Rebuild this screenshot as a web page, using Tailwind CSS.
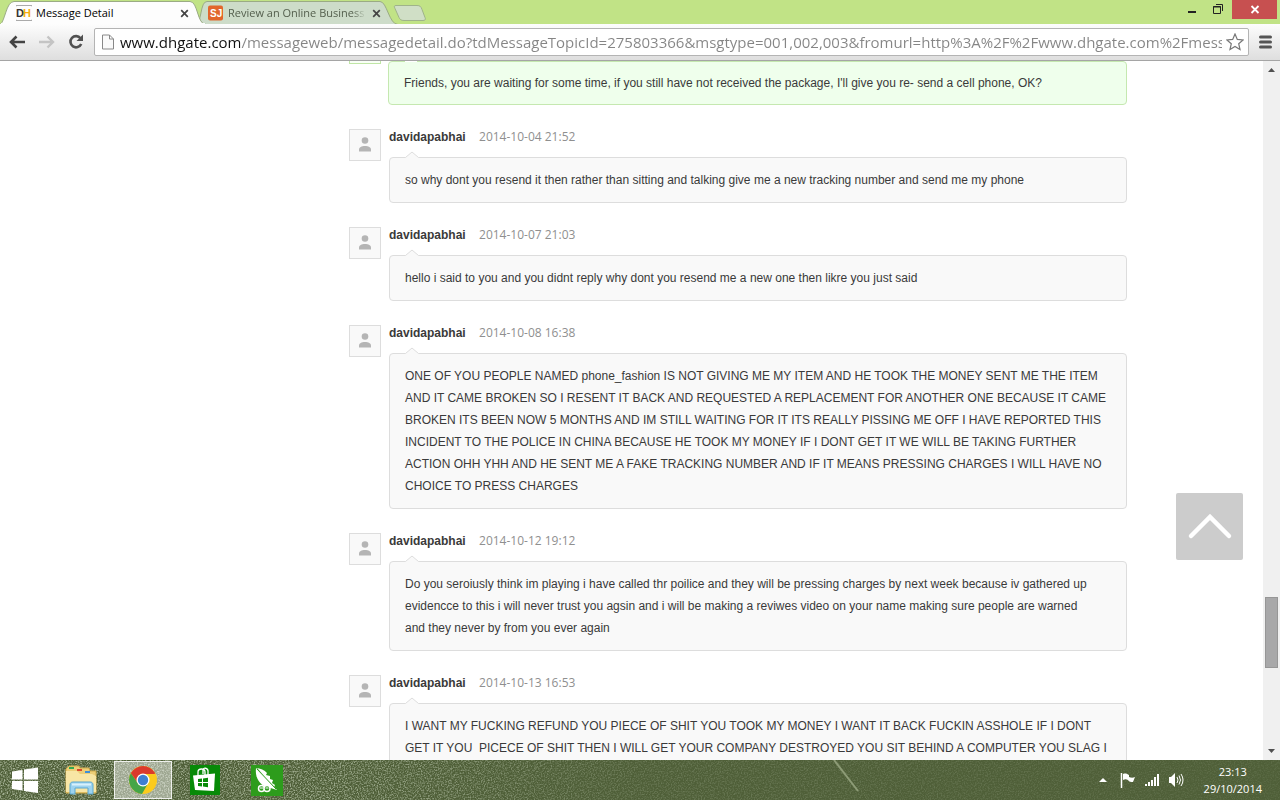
<!DOCTYPE html>
<html lang="en">
<head>
    <meta charset="UTF-8">
    <meta name="viewport" content="width=device-width, initial-scale=1.0">
    <title>Message Detail</title>
    <script src="https://cdn.jsdelivr.net/npm/@tailwindcss/browser@4"></script>
</head>
<body class="h-screen flex flex-col overflow-hidden bg-white font-['Liberation_Sans',Arial,sans-serif] text-xs text-[#3a3a3a]">

<!-- Shared icons -->
<svg class="hidden">
    <symbol id="user" viewBox="0 0 30 30">
        <circle cx="15" cy="10.500" r="3.300" fill="#b5b5b5"/>
        <path d="M9 21.500v-2c0-2 2.500-3.500 6-3.500s6 1.500 6 3.500v2z" fill="#b5b5b5"/>
    </symbol>
    <symbol id="notch" viewBox="0 0 14 7">
        <path d="M0 7L7 1l7 6z" fill="#f9f9f9"/>
        <path d="M0.500 6.500L7 1l6.500 5.500" fill="none" stroke="#ddd"/>
    </symbol>
    <symbol id="close" viewBox="0 0 9 9">
        <path d="M1.200 1.200l6.600 6.600M7.800 1.200l-6.600 6.600" stroke="#444" stroke-width="1.700"/>
    </symbol>
</svg>

<!-- Tab strip -->
<header class="relative h-6 shrink-0 flex items-center bg-[#c1e386] font-['Open_Sans',sans-serif] text-[11px]">
    <svg class="absolute left-0 top-0 w-[440px] h-6" viewBox="0 0 440 24">
        <path d="M196 24.500C202 22 200 1.500 207 1.500H380C387 1.500 389 24.500 398 24.500z" fill="#cddcc9" stroke="#9aab84"/>
        <path d="M396 5.500h21c3 0 4 1 5 4l3 8c1 2 0 3-2 3h-19c-3 0-4-1-5-3l-4-9c-1-2-1-3 1-3z" fill="#d0dfc6" stroke="#9fb38a"/>
        <path d="M0 24.500C5 22 6 1.500 14 1.500H190C198 1.500 197 24.500 206 24.500z" fill="#fdfdfd" stroke="#9aab84"/>
        <path d="M1 24h204" stroke="#fdfdfd" stroke-width="2"/>
    </svg>
    <div class="relative w-[205px] h-full flex items-center pl-4 pt-[2px]">
        <svg class="w-4 h-4" viewBox="0 0 16 16">
            <path d="M0 1.500V.5h16v1M0 14.500v1h16v-1" fill="none" stroke="#aaa"/>
            <text x="0" y="12" font-family="Liberation Sans" font-weight="bold" font-size="11" fill="#333">D</text>
            <text x="7" y="12" font-family="Liberation Sans" font-weight="bold" font-size="11" fill="#f5ae0b">H</text>
        </svg>
        <a href="#" class="ml-1 w-36 text-black whitespace-nowrap">Message Detail</a>
        <button aria-label="Close tab"><svg class="w-[9px] h-[9px]"><use href="#close"/></svg></button>
    </div>
    <div class="relative w-[190px] h-full flex items-center pl-[3px] pt-[2px]">
        <svg class="w-[15px] h-4 shrink-0" viewBox="0 0 15 16">
            <rect y=".5" width="15" height="15" rx="2" fill="#e2662c"/>
            <text x="2" y="12" font-family="Liberation Sans" font-weight="bold" font-size="10" fill="#fff">SJ</text>
        </svg>
        <a href="#" class="ml-[5px] w-[138px] whitespace-nowrap text-[#55604e] mask-r-from-90%">Review an Online Business</a>
        <button aria-label="Close tab" class="ml-[6px]"><svg class="w-[9px] h-[9px]"><use href="#close"/></svg></button>
    </div>
    <div class="ml-auto h-full flex items-start pr-[3px]">
        <button aria-label="Minimise" class="w-[26px] h-5"><svg class="w-[26px] h-5"><path d="M8 12h8" stroke="#222" stroke-width="2"/></svg></button>
        <button aria-label="Restore" class="w-[26px] h-5"><svg class="w-[26px] h-5"><path d="M7.500 6.500h7v7h-7zM7 7h8M10 4.500h6.500V11" fill="none" stroke="#222"/></svg></button>
        <button aria-label="Close" class="w-[45px] h-[19px] bg-[#c75050]"><svg class="w-[45px] h-[19px]"><path d="M19.500 6l7 7m0-7l-7 7" stroke="#fff" stroke-width="1.800"/></svg></button>
    </div>
</header>

<!-- Toolbar -->
<nav class="h-[37px] shrink-0 flex items-center bg-linear-to-b from-[#fdfdfd] to-[#dedede] border-b border-[#a5a5a5] px-2 font-['Open_Sans',sans-serif]">
    <button aria-label="Back" class="w-[18px] h-5"><svg class="w-[18px] h-5"><path d="M3 10h14M8.500 4.500L3 10l5.500 5.500" fill="none" stroke="#444" stroke-width="2.600"/></svg></button>
    <button aria-label="Forward" class="ml-3 w-[18px] h-5"><svg class="w-[18px] h-5"><path d="M1 10h14M9.500 4.500L15 10l-5.500 5.500" fill="none" stroke="#c4c4c4" stroke-width="2.400"/></svg></button>
    <button aria-label="Reload" class="ml-3 w-4 h-5"><svg class="w-4 h-5"><path d="M12.500 6.300A5.600 5.600 0 1 0 13.200 12" fill="none" stroke="#505050" stroke-width="2.600"/><path d="M15 2.500v6.500H8.500z" fill="#505050"/></svg></button>
    <div class="ml-[10px] flex-1 h-7 flex items-center bg-white border border-[#b4b4b4] rounded-xs pl-[7px] pr-1">
        <svg class="w-3 h-4 shrink-0" viewBox="0 0 12 16"><path d="M.5 1h7l4 4v10H.5zM7.500 1v4h4" fill="#fafafa" stroke="#888"/></svg>
        <input type="text" aria-label="Address" class="ml-[6px] flex-1 min-w-0 h-6 text-[15px] outline-none text-transparent bg-clip-text bg-[linear-gradient(to_right,#111_120px,#858585_120px)]" value="www.dhgate.com/messageweb/messagedetail.do?tdMessageTopicId=275803366&amp;msgtype=001,002,003&amp;fromurl=http%3A%2F%2Fwww.dhgate.com%2Fmessageweb">
        <button aria-label="Bookmark" class="ml-1 w-[18px] h-[18px] shrink-0"><svg class="w-[18px] h-[18px]" viewBox="0 0 18 18"><path d="M9 1l2.300 5.400 5.800.5-4.400 3.800 1.300 5.800-5-3.100-5 3.100 1.300-5.800L.9 6.900l5.800-.5z" fill="#fff" stroke="#777" stroke-width="1.200"/></svg></button>
    </div>
    <button aria-label="Menu" class="ml-[10px] w-[13px] h-5"><svg class="w-[13px] h-5"><path d="M1.500 5h10M1.500 10h10M1.500 15h10" stroke="#555" stroke-width="3" stroke-linecap="round"/></svg></button>
</nav>

<div class="relative flex-1 min-h-0 flex">
    <!-- Messages -->
    <main class="flex-1 h-full overflow-hidden pl-[349px] pr-[136px]">
        <div class="flex flex-col gap-6">
            <article class="flex">
                <div class="w-8 h-[3px] shrink-0 border-x border-b border-[#c0e6a6] bg-[#f9fff6]"></div>
                <div class="relative ml-[7px] flex-1 border border-[#c5e8b0] rounded-sm bg-[#efffec] px-[15px] py-[10px] leading-[22px]">
                    <span class="absolute -top-px left-4 w-3 h-px bg-white"></span>
                    Friends, you are waiting for some time, if you still have not received the package, I'll give you re- send a cell phone, OK?
                </div>
            </article>
            <article class="flex gap-2">
                <svg class="w-8 h-8 shrink-0 border border-[#ddd] bg-[#f9f9f9]"><use href="#user"/></svg>
                <div class="flex-1 min-w-0">
                    <h3 class="leading-4 font-bold">davidapabhai <time class="ml-[10px] font-normal text-[#8f8f8f] font-['Open_Sans']">2014-10-04 21:52</time></h3>
                    <div class="relative mt-3 border border-[#ddd] rounded-sm bg-[#f9f9f9] px-[15px] py-[11px] leading-[22px]">
                        <svg class="absolute -top-[7px] left-[15px] w-[14px] h-[7px]"><use href="#notch"/></svg>
                        so why dont you resend it then rather than sitting and talking give me a new tracking number and send me my phone
                    </div>
                </div>
            </article>
            <article class="flex gap-2">
                <svg class="w-8 h-8 shrink-0 border border-[#ddd] bg-[#f9f9f9]"><use href="#user"/></svg>
                <div class="flex-1 min-w-0">
                    <h3 class="leading-4 font-bold">davidapabhai <time class="ml-[10px] font-normal text-[#8f8f8f] font-['Open_Sans']">2014-10-07 21:03</time></h3>
                    <div class="relative mt-3 border border-[#ddd] rounded-sm bg-[#f9f9f9] px-[15px] py-[11px] leading-[22px]">
                        <svg class="absolute -top-[7px] left-[15px] w-[14px] h-[7px]"><use href="#notch"/></svg>
                        hello i said to you and you didnt reply why dont you resend me a new one then likre you just said
                    </div>
                </div>
            </article>
            <article class="flex gap-2">
                <svg class="w-8 h-8 shrink-0 border border-[#ddd] bg-[#f9f9f9]"><use href="#user"/></svg>
                <div class="flex-1 min-w-0">
                    <h3 class="leading-4 font-bold">davidapabhai <time class="ml-[10px] font-normal text-[#8f8f8f] font-['Open_Sans']">2014-10-08 16:38</time></h3>
                    <div class="relative mt-3 border border-[#ddd] rounded-sm bg-[#f9f9f9] px-[15px] py-[11px] leading-[22px]">
                        <svg class="absolute -top-[7px] left-[15px] w-[14px] h-[7px]"><use href="#notch"/></svg>
                        ONE OF YOU PEOPLE NAMED phone_fashion IS NOT GIVING ME MY ITEM AND HE TOOK THE MONEY SENT ME THE ITEM AND IT CAME BROKEN SO I RESENT IT BACK AND REQUESTED A REPLACEMENT FOR ANOTHER ONE BECAUSE IT CAME BROKEN ITS BEEN NOW 5 MONTHS AND IM STILL WAITING FOR IT ITS REALLY PISSING ME OFF I HAVE REPORTED THIS INCIDENT TO THE POLICE IN CHINA BECAUSE HE TOOK MY MONEY IF I DONT GET IT WE WILL BE TAKING FURTHER ACTION OHH YHH AND HE SENT ME A FAKE TRACKING NUMBER AND IF IT MEANS PRESSING CHARGES I WILL HAVE NO CHOICE TO PRESS CHARGES
                    </div>
                </div>
            </article>
            <article class="flex gap-2">
                <svg class="w-8 h-8 shrink-0 border border-[#ddd] bg-[#f9f9f9]"><use href="#user"/></svg>
                <div class="flex-1 min-w-0">
                    <h3 class="leading-4 font-bold">davidapabhai <time class="ml-[10px] font-normal text-[#8f8f8f] font-['Open_Sans']">2014-10-12 19:12</time></h3>
                    <div class="relative mt-3 border border-[#ddd] rounded-sm bg-[#f9f9f9] px-[15px] py-[11px] leading-[22px]">
                        <svg class="absolute -top-[7px] left-[15px] w-[14px] h-[7px]"><use href="#notch"/></svg>
                        Do you seroiusly think im playing i have called thr poilice and they will be pressing charges by next week because iv gathered up evidencce to this i will never trust you agsin and i will be making a reviwes video on your name making sure people are warned<br>
                        and they never by from you ever again
                    </div>
                </div>
            </article>
            <article class="flex gap-2">
                <svg class="w-8 h-8 shrink-0 border border-[#ddd] bg-[#f9f9f9]"><use href="#user"/></svg>
                <div class="flex-1 min-w-0">
                    <h3 class="leading-4 font-bold">davidapabhai <time class="ml-[10px] font-normal text-[#8f8f8f] font-['Open_Sans']">2014-10-13 16:53</time></h3>
                    <div class="relative mt-3 border border-[#ddd] rounded-sm bg-[#f9f9f9] px-[15px] py-[11px] leading-[22px]">
                        <svg class="absolute -top-[7px] left-[15px] w-[14px] h-[7px]"><use href="#notch"/></svg>
                        I WANT MY FUCKING REFUND YOU PIECE OF SHIT YOU TOOK MY MONEY I WANT IT BACK FUCKIN ASSHOLE IF I DONT GET IT YOU&nbsp; PICECE OF SHIT THEN I WILL GET YOUR COMPANY DESTROYED YOU SIT BEHIND A COMPUTER YOU SLAG I
                    </div>
                </div>
            </article>
        </div>
    </main>

    <!-- Back to top -->
    <button aria-label="Back to top" class="absolute right-[37px] bottom-[200px] w-[67px] h-[67px] rounded-xs bg-[#ccc]">
        <svg class="w-[67px] h-[67px]"><path d="M15 43l19-19 19 19" fill="none" stroke="#fff" stroke-width="4.500" stroke-linecap="round"/></svg>
    </button>

    <!-- Scrollbar -->
    <div class="w-[17px] shrink-0 bg-[#f0f0f0] flex flex-col items-center">
        <svg class="w-[17px] h-[17px] shrink-0"><path d="M5 11l3.500-4 3.500 4z" fill="#505050"/></svg>
        <div class="grow-519"></div>
        <div class="w-[13px] h-[71px] shrink-0 bg-[#a8a8a9] border border-[#969696]"></div>
        <div class="grow-75"></div>
        <svg class="w-[17px] h-[17px] shrink-0"><path d="M5 6l3.500 4L12 6z" fill="#505050"/></svg>
    </div>
</div>

<!-- Taskbar -->
<footer class="relative h-10 shrink-0 bg-[#4f5f38] flex items-center text-white font-['Open_Sans',sans-serif] text-[11px]">
    <svg class="absolute inset-0 w-full h-10">
        <filter id="grain" x="0" y="0" width="100%" height="100%">
            <feTurbulence type="fractalNoise" baseFrequency="0.7" numOctaves="2"/>
            <feColorMatrix values="0 0 0 0 0.66  0 0 0 0 0.74  0 0 0 0 0.58  3 0 0 0 -1.25"/>
        </filter>
        <linearGradient id="fade">
            <stop offset="0" stop-color="#fff" stop-opacity=".65"/>
            <stop offset=".25" stop-color="#fff" stop-opacity=".6"/>
            <stop offset=".5" stop-color="#fff" stop-opacity=".2"/>
            <stop offset="1" stop-color="#fff" stop-opacity=".1"/>
        </linearGradient>
        <mask id="thin"><rect width="100%" height="40" fill="url(#fade)"/></mask>
        <g mask="url(#thin)"><rect width="100%" height="40" filter="url(#grain)"/></g>
        <path d="M834 0l24 31" stroke="#8d9b76" stroke-width="2"/>
    </svg>
    <button aria-label="Start" class="relative ml-3 w-[26px] h-[26px]">
        <svg class="w-[26px] h-[26px]" viewBox="0 0 26 26"><path d="M0 4.500l10.500-1.600V12.500H0zM12 2.600L26 .5v12H12zM0 14h10.500v9.400L0 22zM12 14h14v12l-14-2.100z" fill="#fff"/></svg>
    </button>
    <button aria-label="File Explorer" class="relative ml-[27px] w-[33px] h-[30px]">
        <svg class="w-[33px] h-[30px]" viewBox="0 0 33 30">
            <path d="M1 4l3-3h10l1 2h9l1 3h6v22H1z" fill="#edcf77" stroke="#cda94c"/>
            <path d="M4 2h5v2H4z" fill="#32a852"/><path d="M12 4h5v2h-5z" fill="#d9482f"/><path d="M20 6h5v2h-5z" fill="#3e8fd8"/>
            <path d="M1 6h11l3 3h12l4 2v16H1z" fill="#f8e6a5"/>
            <path d="M5 29V20c0-2 1-3 3-3h17c2 0 3 1 3 3v9h-5v-6H10v6z" fill="#9dd3ef" stroke="#5ba7d0"/>
            <path d="M7 19.500h19" stroke="#d8f1fc" stroke-width="2"/>
        </svg>
    </button>
    <button aria-label="Chrome" class="relative ml-4 w-[58px] h-[38px] flex items-center justify-center bg-white/45 border border-white/80">
        <svg class="w-7 h-7" viewBox="0 0 28 28">
            <circle cx="14" cy="14" r="14" fill="#fbcb1d"/>
            <path d="M14 14L1.900 7A14 14 0 0 1 26.100 7L25.500 8H14z" fill="#db3a2c"/>
            <path d="M1.900 7A14 14 0 0 0 13 28l6.200-11L8.800 17z" fill="#45a547"/>
            <path d="M1.900 7L8.800 17 14 14 14 8z" fill="#db3a2c"/>
            <circle cx="14" cy="14" r="6.500" fill="#fff"/>
            <circle cx="14" cy="14" r="5.200" fill="#3f7fd1"/>
        </svg>
    </button>
    <button aria-label="Store" class="relative ml-[18px] w-[30px] h-[30px] bg-[#078a07]">
        <svg class="w-[30px] h-[30px]" viewBox="0 0 30 30">
            <path d="M8 11V7c0-4 7-4 7 0v3M13 9V5c0-3 5-2 5 1v4" fill="none" stroke="#fff" stroke-width="1.300"/>
            <path d="M3 10.500L25 8.500 24 26 5 25z" fill="#fff"/>
            <path d="M8 14l4-.5V17H8zM13 13.400l5-.6V17h-5zM8 18h4v3.500L8 21zM13 18h5v4.200l-5-.6z" fill="#078a07"/>
        </svg>
    </button>
    <button aria-label="Fruit Ninja" class="relative ml-[31px] w-8 h-[31px] bg-[#2d9c1c]">
        <svg class="w-8 h-[31px]" viewBox="0 0 32 31">
            <path d="M5 3C4 11 7 17 13 21l13 4L15 12z" fill="#fff"/>
            <path d="M6 3c6 1 8 3 10 5l-1 2 4 1 0 3 3 1-1 3 3 2-1 2 3 3z" fill="#fff"/>
            <path d="M6 4l19 20" stroke="#2d9c1c"/>
            <circle cx="10.500" cy="23.500" r="3" fill="#2d9c1c" stroke="#fff" stroke-width="1.500"/><circle cx="16" cy="23.500" r="3" fill="#2d9c1c" stroke="#fff" stroke-width="1.500"/>
            <path d="M9 23h3M14.500 23h3" stroke="#fff"/>
        </svg>
    </button>
    <div class="relative ml-auto flex items-center pr-[18px]">
        <svg class="w-2 h-2" viewBox="0 0 8 8"><path d="M0 6l4-4 4 4z" fill="#fff"/></svg>
        <svg class="ml-[13px] w-4 h-4" viewBox="0 0 16 16"><path d="M1.500 1v15" stroke="#fff" stroke-width="1.500"/><path d="M3 2c3-1 4 0 6 1v2c2 1 4 1 6 0l-2 5c-2 0-4 0-5-2-2-1-3-1-5 0z" fill="#fff"/></svg>
        <svg class="ml-2 w-4 h-4" viewBox="0 0 16 16"><path d="M1 14v-2h2v2zM4 14v-4h2v4zM7 14V8h2v6zM10 14V5h2v9zM13 14V2h2v12z" fill="#fff"/></svg>
        <svg class="ml-2 w-4 h-4" viewBox="0 0 16 16"><path d="M1 5h2l4-4v14l-4-4H1z" fill="#fff"/><path d="M9 5q2 3 0 6M11 3.500q3 4.500 0 9M13 2q4 6 0 12" fill="none" stroke="#fff"/></svg>
        <div class="ml-5 text-center leading-[17px]">
            <p>23:13</p>
            <p>29/10/2014</p>
        </div>
    </div>
</footer>

</body>
</html>
